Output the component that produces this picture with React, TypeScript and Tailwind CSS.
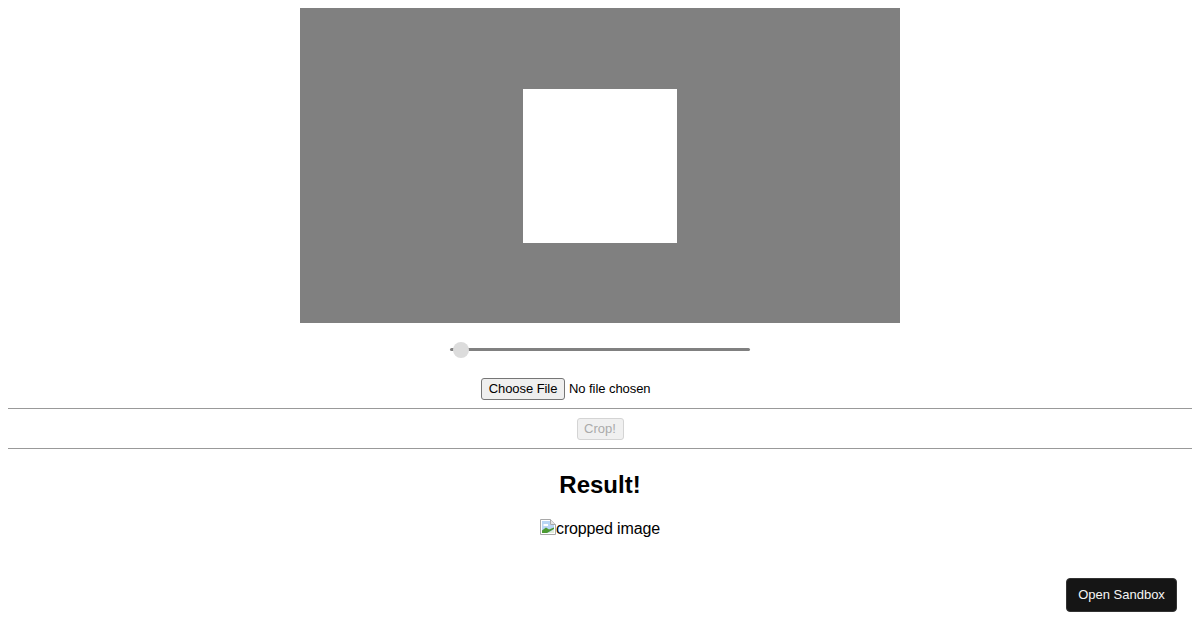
import React from "react";

const BrokenImage = () => (
  <svg width="16" height="16" viewBox="0 0 16 16" className="inline-block align-[-1px]">
    <path d="M0.5 0.5H10.5L15.5 5.5V15.5H0.5Z" fill="#fff" stroke="#a8a8a8" />
    <path d="M2 2H10V6H14V14H2Z" fill="#b9d6f5" />
    <path d="M3.5 5h4.5v2H3.5z" fill="#fff" />
    <path d="M10.5 0.5V5.5H15.5" fill="#e4e4e4" stroke="#a8a8a8" />
    <path d="M2 14V11.5L6 8.5L9 10.5L14 8.5V10L7 14Z" fill="#4c9a32" />
    <path d="M8 14L14 10.5V14Z" fill="#e3efdc" />
  </svg>
);

const App = () => {
  return (
    <div className="min-h-screen bg-white p-2 text-center text-black font-['Liberation_Sans',Arial,sans-serif]">
      {/* crop area */}
      <div className="mx-auto flex h-[315px] w-[600px] items-center justify-center bg-[#808080]">
        <div className="h-[154px] w-[154px] bg-white"></div>
      </div>

      {/* zoom slider */}
      <div className="mt-[19px] flex h-[16px] justify-center">
        <div className="relative flex h-[16px] w-[300px] items-center">
          <div className="mb-[1px] h-[3px] w-full rounded-full bg-[#808080]"></div>
          <div className="absolute left-[3px] top-0 h-[16px] w-[16px] rounded-full bg-[#dcdcdc]"></div>
        </div>
      </div>

      <div className="mt-[20px] flex h-[22px] justify-center">
        <input
          type="file"
          className="w-[238px] text-[13px] tracking-[-0.06px] [&::file-selector-button]:mr-[4px] [&::file-selector-button]:h-[22px] [&::file-selector-button]:w-[84px] [&::file-selector-button]:rounded-[3px] [&::file-selector-button]:border [&::file-selector-button]:border-[#767676] [&::file-selector-button]:bg-[#efefef] [&::file-selector-button]:px-0"
        />
      </div>

      <hr className="mt-[8px] h-[1px] border-0 bg-[#999]" />

      <div className="mt-[9px] mb-[8px] flex justify-center">
        <button
          disabled
          className="h-[22px] w-[47px] rounded-[3px] border border-[#d4d4d4] bg-[#f0f0f0] text-[13px] text-[#aaa]"
        >
          Crop!
        </button>
      </div>

      <hr className="h-[1px] border-0 bg-[#999]" />

      <h2 className="mt-[22px] text-[24px] leading-[28px] font-bold">Result!</h2>

      <div className="mt-[20px] leading-[18px] tracking-[-0.15px]">
        <BrokenImage />
        <span>cropped image</span>
      </div>

      <div className="fixed right-[23px] bottom-[18px]">
        <button className="h-[34px] w-[111px] rounded-[4px] border border-[#333] bg-[#151515] text-[13px] text-[#f5f5f5]">
          Open Sandbox
        </button>
      </div>
    </div>
  );
};

export default App;
